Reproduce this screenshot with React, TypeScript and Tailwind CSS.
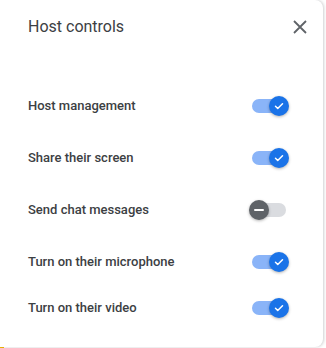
import { useState } from "react";

const rows = [
  { label: "Host management", on: true },
  { label: "Share their screen", on: true },
  { label: "Send chat messages", on: false },
  { label: "Turn on their microphone", on: true },
  { label: "Turn on their video", on: true },
];

const Toggle = ({ on, onClick }: { on: boolean; onClick: () => void }) => (
  <button
    onClick={onClick}
    className="relative w-[34px] h-[14px] shrink-0"
    aria-pressed={on}
  >
    <span
      className={
        on
          ? "absolute inset-0 rounded-full bg-[#8ab4f8]"
          : "absolute inset-0 rounded-full bg-[#dadce0]"
      }
    />
    {on ? (
      <span className="absolute right-[-3px] top-[-3px] w-5 h-5 rounded-full bg-[#1a73e8] shadow-[0_1px_3px_rgba(0,0,0,0.3)] flex items-center justify-center">
        <svg width="12" height="12" viewBox="0 0 24 24" fill="none">
          <path
            d="M5 12.5l4.5 4.5L19 7.5"
            stroke="white"
            strokeWidth="3"
            strokeLinecap="round"
            strokeLinejoin="round"
          />
        </svg>
      </span>
    ) : (
      <span className="absolute left-[-3px] top-[-3px] w-5 h-5 rounded-full bg-[#5f6368] shadow-[0_1px_3px_rgba(0,0,0,0.3)] flex items-center justify-center">
        <span className="w-[10px] h-[2.5px] rounded-full bg-white" />
      </span>
    )}
  </button>
);

const App = () => {
  const [state, setState] = useState(rows.map((r) => r.on));

  return (
    <div className="w-[326px] h-[348px] bg-white relative overflow-hidden font-['Roboto',sans-serif]">
      <div className="absolute left-0 bottom-0 w-[4px] h-[10px] bg-[#f2b705] rounded-tr" />
      <div className="w-[323px] h-[347px] bg-white rounded-br-lg rounded-tr-lg shadow-[1px_0_3px_rgba(60,64,67,0.25)] relative">
        <div className="flex items-center justify-between pl-[28px] pr-[11px] pt-[15px]">
          <h2 className="text-[16px] text-[#3c4043] leading-[24px]">
            Host controls
          </h2>
          <button className="w-6 h-6 flex items-center justify-center text-[#5f6368]">
            <svg width="14" height="14" viewBox="0 0 14 14">
              <path
                d="M1 1L13 13M13 1L1 13"
                stroke="currentColor"
                strokeWidth="1.8"
              />
            </svg>
          </button>
        </div>
        <div className="flex flex-col pl-[28px] pr-[37px] pt-[57px] gap-[32px]">
          {rows.map((row, i) => (
            <div
              key={row.label}
              className="flex items-center justify-between h-[20px] last:mt-[-6px]"
            >
              <span className="text-[13px] font-medium text-[#3c4043]">
                {row.label}
              </span>
              <Toggle
                on={state[i]}
                onClick={() =>
                  setState(state.map((v, j) => (j === i ? !v : v)))
                }
              />
            </div>
          ))}
        </div>
      </div>
    </div>
  );
};

export default App;
